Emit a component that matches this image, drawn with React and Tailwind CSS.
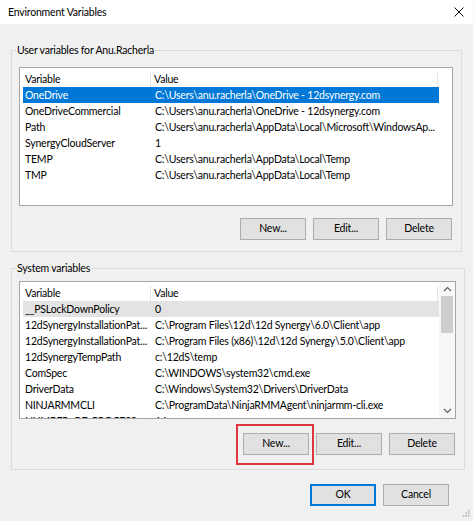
import React from "react";

const font = { fontFamily: 'Lato, "Noto Sans", sans-serif', letterSpacing: "-0.2px" };

function Btn({ children, primary }) {
  return (
    <div
      className={
        "w-[66px] h-[22px] flex items-center justify-center bg-[#e1e1e1] text-[10.5px] text-black border " +
        (primary ? "border-[#0078d7] shadow-[inset_0_0_0_1px_#0078d7]" : "border-[#adadad]")
      }
    >
      {children}
    </div>
  );
}

function Header() {
  return (
    <div className="flex h-[19px] items-center w-[418px] text-[10.5px] text-black pt-[4px]">
      <div className="w-[131px] pl-[5px] h-full flex items-center border-r border-[#e5e5e5]">Variable</div>
      <div className="flex-1 pl-[3px] h-full flex items-center border-r border-[#e5e5e5]">Value</div>
    </div>
  );
}

function Row({ name, value, sel, hover }) {
  return (
    <div
      className={
        "ml-[3px] w-[416px] h-[16px] flex items-center pt-[1px] text-[10.5px] whitespace-nowrap " +
        (sel ? "bg-[#0078d7] text-white" : hover ? "bg-[#e3e3e3] text-black" : "text-black")
      }
    >
      <div className="w-[128px] pl-[2px] overflow-hidden text-ellipsis">{name}</div>
      <div className="flex-1 pl-[4px] overflow-hidden text-ellipsis">{value}</div>
    </div>
  );
}

const userRows = [
  ["OneDrive", "C:\\Users\\anu.racherla\\OneDrive - 12dsynergy.com"],
  ["OneDriveCommercial", "C:\\Users\\anu.racherla\\OneDrive - 12dsynergy.com"],
  ["Path", "C:\\Users\\anu.racherla\\AppData\\Local\\Microsoft\\WindowsAp..."],
  ["SynergyCloudServer", "1"],
  ["TEMP", "C:\\Users\\anu.racherla\\AppData\\Local\\Temp"],
  ["TMP", "C:\\Users\\anu.racherla\\AppData\\Local\\Temp"],
];

const sysRows = [
  ["__PSLockDownPolicy", "0"],
  ["12dSynergyInstallationPat...", "C:\\Program Files\\12d\\12d Synergy\\6.0\\Client\\app"],
  ["12dSynergyInstallationPat...", "C:\\Program Files (x86)\\12d\\12d Synergy\\5.0\\Client\\app"],
  ["12dSynergyTempPath", "c:\\12dS\\temp"],
  ["ComSpec", "C:\\WINDOWS\\system32\\cmd.exe"],
  ["DriverData", "C:\\Windows\\System32\\Drivers\\DriverData"],
  ["NINJARMMCLI", "C:\\ProgramData\\NinjaRMMAgent\\ninjarmm-cli.exe"],
  ["NUMBER_OF_PROCESSORS", "16"],
];

function Chevron({ up }) {
  return (
    <svg width="9" height="6" viewBox="0 0 9 6">
      <path
        d={up ? "M1 5 L4.5 1.5 L8 5" : "M1 1 L4.5 4.5 L8 1"}
        fill="none"
        stroke="#606060"
        strokeWidth="1.2"
      />
    </svg>
  );
}

export default function App() {
  return (
    <div className="w-[474px] h-[521px] bg-[#f0f0f0] flex flex-col overflow-hidden border-r border-[#fafafa]" style={font}>
      <div className="h-[24px] bg-white flex items-center justify-between pl-[8px] pr-[9px] shrink-0">
        <span className="text-[10.5px] text-black pt-[2px]">Environment Variables</span>
        <svg width="10" height="10" viewBox="0 0 10 10">
          <path d="M0.5 0.5 L9.5 9.5 M9.5 0.5 L0.5 9.5" stroke="#111" strokeWidth="1" />
        </svg>
      </div>

      <div className="px-[11px] flex flex-col">
        <fieldset className="mt-[18px] border border-[#dcdcdc] p-0 m-0">
          <legend className="ml-[4px] px-[1px] text-[10.5px] leading-[16px] text-black">
            User variables for Anu.Racherla
          </legend>
          <div className="pl-[7px] pr-[8px] pb-[11px]">
            <div className="mt-[9px] h-[139px] bg-white border border-[#a6a6a6] overflow-hidden">
              <Header />
              {userRows.map((r, i) => (
                <Row key={i} name={r[0]} value={r[1]} sel={i === 0} />
              ))}
            </div>
            <div className="mt-[12px] flex justify-end gap-[7px] pr-[1px]">
              <Btn>New...</Btn>
              <Btn>Edit...</Btn>
              <Btn>Delete</Btn>
            </div>
          </div>
        </fieldset>

        <fieldset className="mt-[8px] border border-[#dcdcdc] p-0 m-0">
          <legend className="ml-[4px] px-[1px] text-[10.5px] leading-[16px] text-black">System variables</legend>
          <div className="pl-[7px] pr-[8px] pb-[14px]">
            <div className="mt-[5px] h-[138px] bg-white border border-[#a6a6a6] overflow-hidden flex">
              <div className="flex-1 overflow-hidden">
                <Header />
                {sysRows.map((r, i) => (
                  <Row key={i} name={r[0]} value={r[1]} hover={i === 0} />
                ))}
              </div>
              <div className="w-[16px] flex flex-col bg-[#f7f7f7]">
                <div className="h-[14px] flex items-center justify-center">
                  <Chevron up />
                </div>
                <div className="h-[37px] mx-[2px] bg-[#cdcdcd]" />
                <div className="flex-1" />
                <div className="h-[14px] flex items-center justify-center">
                  <Chevron />
                </div>
              </div>
            </div>
            <div className="mt-[14px] flex justify-end gap-[7px] pr-[1px]">
              <div className="relative">
                <Btn>New...</Btn>
                <div className="absolute left-[-7px] right-[-5px] top-[-9px] bottom-[-10px] border-2 border-[#e0343c]" />
              </div>
              <Btn>Edit...</Btn>
              <Btn>Delete</Btn>
            </div>
          </div>
        </fieldset>

        <div className="mt-[14px] flex justify-end gap-[7px] pr-[13px]">
          <Btn primary>OK</Btn>
          <Btn>Cancel</Btn>
        </div>
      </div>

      <div className="flex-1 flex items-end justify-end pr-[3px] pb-[4px]">
        <svg width="7" height="7" viewBox="0 0 7 7">
          <rect x="5" y="0" width="1.5" height="1.5" fill="#b0b0b0" />
          <rect x="2.5" y="2.5" width="1.5" height="1.5" fill="#b0b0b0" />
          <rect x="5" y="2.5" width="1.5" height="1.5" fill="#b0b0b0" />
          <rect x="0" y="5" width="1.5" height="1.5" fill="#b0b0b0" />
          <rect x="2.5" y="5" width="1.5" height="1.5" fill="#b0b0b0" />
          <rect x="5" y="5" width="1.5" height="1.5" fill="#b0b0b0" />
        </svg>
      </div>
    </div>
  );
}
